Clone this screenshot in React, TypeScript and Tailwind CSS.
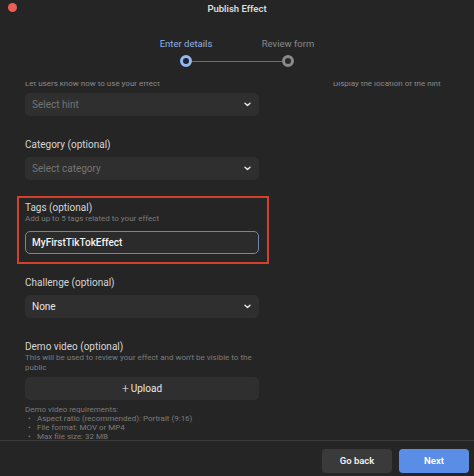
import React from 'react'

function Chevron() {
  return (
    <svg width="7" height="5" viewBox="0 0 7 5" className="shrink-0">
      <path d="M1 1.2 L3.5 3.6 L6 1.2" stroke="#e8e8e8" strokeWidth="1.4" fill="none" strokeLinecap="round" strokeLinejoin="round" />
    </svg>
  )
}

function SelectBox({ text, placeholder }: { text: string; placeholder?: boolean }) {
  return (
    <div className="h-[23px] rounded-[5px] bg-[#2f2f2f] flex items-center justify-between pl-[7px] pr-[8px]">
      <span className={placeholder ? 'text-[10px] text-[#747474]' : 'text-[10px] text-[#e4e4e4]'}>{text}</span>
      <Chevron />
    </div>
  )
}

export default function App() {
  return (
    <div
      className="w-[474px] h-[476px] bg-[#252525] flex flex-col overflow-hidden"
      style={{ fontFamily: 'Roboto, "Noto Sans", sans-serif' }}
    >
      {/* title bar */}
      <div className="relative h-[18px] flex items-center justify-center">
        <span className="absolute left-[8px] top-[3px] w-[9px] h-[9px] rounded-full bg-[#ec5f57]" />
        <span className="text-[9.5px] font-medium text-[#e2e2e2] leading-none">Publish Effect</span>
      </div>

      {/* stepper */}
      <div className="mt-[20px] flex flex-col items-center">
        <div className="flex gap-[42px]">
          <div className="w-[60px] text-center text-[9.5px] leading-[12px] text-[#8fb2e6] whitespace-nowrap">Enter details</div>
          <div className="w-[60px] text-center text-[9.5px] leading-[12px] text-[#8a8a8a] whitespace-nowrap">Review form</div>
        </div>
        <div className="mt-[5px] flex items-center">
          <div className="w-[12px] h-[12px] rounded-full border-[3px] border-[#94b8f0] bg-[#1c2533]" />
          <div className="w-[90px] h-px bg-[#6e6e6e]" />
          <div className="w-[12px] h-[12px] rounded-full border-[3px] border-[#8a8a8a] bg-[#2a2a2a]" />
        </div>
      </div>

      {/* scrolled content */}
      <div className="mt-[15px] h-[358px] overflow-hidden">
        <div className="-mt-[3px] flex">
          <div className="ml-[25px] w-[234px] flex flex-col">
            <div className="text-[8px] leading-[10px] text-[#8a8a8a]">Let users know how to use your effect</div>
            <div className="mt-[4px]">
              <SelectBox text="Select hint" placeholder />
            </div>

            <div className="mt-[23px] text-[10px] leading-[12px] text-[#d6d6d6]">Category (optional)</div>
            <div className="mt-[6px]">
              <SelectBox text="Select category" placeholder />
            </div>

            <div className="mt-[16px] -ml-[8px] w-[252px] border-2 border-[#d4402a] pl-[6px] pr-[8px] pt-[4px] pb-[8px]">
              <div className="text-[10px] leading-[12px] text-[#d6d6d6]">Tags (optional)</div>
              <div className="text-[8px] leading-[10px] text-[#7c7c7c]">Add up to 5 tags related to your effect</div>
              <div className="mt-[7px] h-[23px] rounded-[5px] bg-[#2b2b2b] border border-[#6f87ad] flex items-center pl-[6px]">
                <span className="text-[10px] font-medium text-[#f2f2f2]">MyFirstTikTokEffect</span>
              </div>
            </div>

            <div className="mt-[13px] text-[10px] leading-[12px] text-[#d6d6d6]">Challenge (optional)</div>
            <div className="mt-[6px]">
              <SelectBox text="None" />
            </div>

            <div className="mt-[23px] text-[10px] leading-[12px] text-[#d6d6d6]">Demo video (optional)</div>
            <div className="text-[8px] leading-[10px] text-[#7c7c7c] pr-[6px]">
              This will be used to review your effect and won't be visible to the public
            </div>
            <div className="mt-[4px] h-[23px] rounded-[5px] bg-[#2f2f2f] flex items-center justify-center gap-[2px]">
              <span className="text-[12px] leading-none text-[#e8e8e8] font-light">+</span>
              <span className="text-[10px] text-[#e8e8e8]">Upload</span>
            </div>

            <div className="mt-[5px] text-[8px] leading-[9px] text-[#7c7c7c]">
              <div>Demo video requirements:</div>
              <div className="flex">
                <span className="w-[12px] pl-[3px]">•</span>
                <span>Aspect ratio (recommended): Portrait (9:16)</span>
              </div>
              <div className="flex">
                <span className="w-[12px] pl-[3px]">•</span>
                <span>File format: MOV or MP4</span>
              </div>
              <div className="flex">
                <span className="w-[12px] pl-[3px]">•</span>
                <span>Max file size: 32 MB</span>
              </div>
            </div>
          </div>

          <div className="ml-[74px] text-[8px] leading-[10px] text-[#8a8a8a] whitespace-nowrap">
            Display the location of the hint
          </div>
        </div>
      </div>

      {/* footer */}
      <div className="border-t border-[#3a3a3a] flex justify-end gap-[7px] pt-[8px] pr-[5px]">
        <button className="w-[70px] h-[24px] rounded-[4px] bg-[#3a3a3a] text-[9.5px] font-semibold text-[#f0f0f0]">
          Go back
        </button>
        <button className="w-[70px] h-[24px] rounded-[4px] bg-[#5a8ee6] text-[9.5px] font-semibold text-white">
          Next
        </button>
      </div>
    </div>
  )
}
